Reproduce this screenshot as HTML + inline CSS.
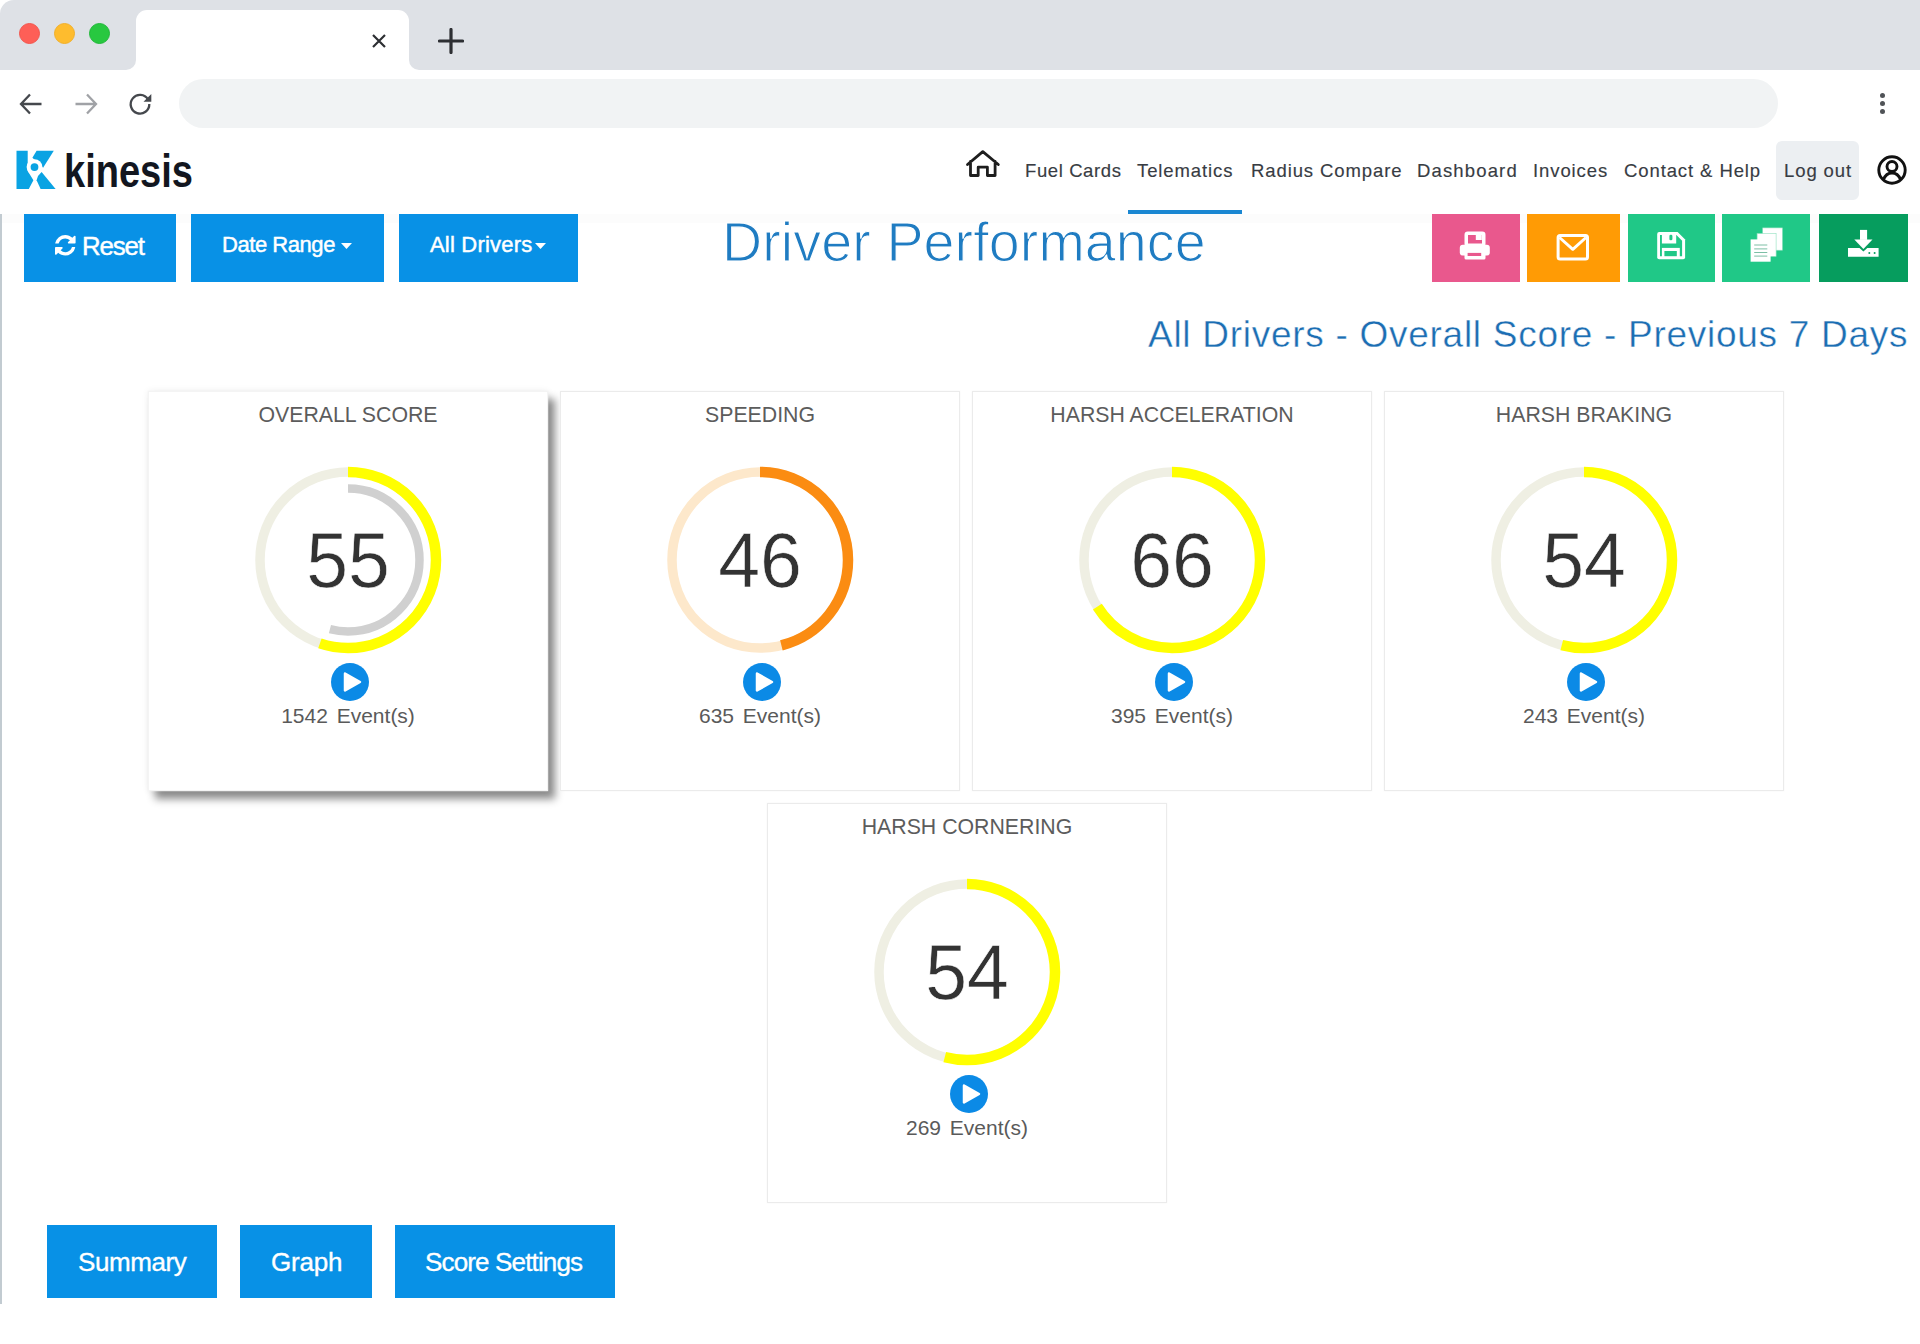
<!DOCTYPE html>
<html><head><meta charset="utf-8">
<style>
*{box-sizing:border-box;margin:0;padding:0}
html,body{width:1920px;height:1344px;overflow:hidden;background:#fff;font-family:"Liberation Sans",sans-serif}
.a{position:absolute}
.t{position:absolute;white-space:nowrap;line-height:1}
/* chrome */
#strip{left:0;top:0;width:1920px;height:70px;background:#dee1e6;border-top-left-radius:14px}
#tab{left:136px;top:10px;width:273px;height:60px;background:#fff;border-radius:11px 11px 0 0}
.dot{width:21px;height:21px;border-radius:50%;top:23px}
#addr{left:179px;top:79px;width:1599px;height:49px;background:#f1f3f4;border-radius:25px}
.btn{position:absolute;background:#0891e6;color:#fff}
.card{position:absolute;width:400px;height:400px;background:#fff;border:1px solid #ebebeb;box-shadow:0 0 1.5px #f2f2f2}
.ctitle{position:absolute;left:0;width:100%;text-align:center;font-size:21.3px;color:#5c5c5c;line-height:1;white-space:nowrap}
.num{position:absolute;left:0;width:100%;text-align:center;font-size:78px;color:#333;line-height:1;-webkit-text-stroke:0.6px #fff;transform:scaleX(0.965)}
.ev{position:absolute;left:0;width:100%;text-align:center;font-size:21px;word-spacing:3px;color:#5a5a5a;line-height:1;white-space:nowrap}
.nav{position:absolute;font-size:18.5px;letter-spacing:0.9px;color:#383c43;-webkit-text-stroke:0.15px #383c43;line-height:1;white-space:nowrap}
</style></head><body>
<!-- Browser chrome -->
<div class="a" id="strip"></div>
<div class="a" style="left:0;top:0;width:14px;height:14px;background:#fff"></div>
<div class="a" style="left:0;top:0;width:28px;height:28px;background:#dee1e6;border-top-left-radius:14px"></div>
<div class="a dot" style="left:19px;background:#fe5f57;border:1px solid #f2564e"></div>
<div class="a dot" style="left:54px;background:#febc2e;border:1px solid #f1b02a"></div>
<div class="a dot" style="left:89px;background:#28c840;border:1px solid #22b83a"></div>
<!-- tab with inverse bottom corners -->
<div class="a" style="left:126px;top:60px;width:10px;height:10px;background:#fff"></div>
<div class="a" style="left:116px;top:50px;width:20px;height:20px;background:#dee1e6;border-bottom-right-radius:10px"></div>
<div class="a" style="left:409px;top:60px;width:10px;height:10px;background:#fff"></div>
<div class="a" style="left:409px;top:50px;width:20px;height:20px;background:#dee1e6;border-bottom-left-radius:10px"></div>
<div class="a" id="tab"></div>
<svg class="a" style="left:371px;top:33px" width="16" height="16" viewBox="0 0 16 16"><path d="M2 2L14 14M14 2L2 14" stroke="#2d2f33" stroke-width="2.2" fill="none"/></svg>
<svg class="a" style="left:438px;top:28px" width="26" height="26" viewBox="0 0 26 26"><path d="M13 1.5V24.5M1.5 13H24.5" stroke="#2d2f33" stroke-width="3.2" stroke-linecap="round" fill="none"/></svg>
<!-- toolbar -->
<svg class="a" style="left:18px;top:91px" width="26" height="26" viewBox="0 0 26 26"><path d="M23.5 13H4M12 3.5L3 13L12 22.5" stroke="#45484d" stroke-width="2.3" fill="none"/></svg>
<svg class="a" style="left:73px;top:91px" width="26" height="26" viewBox="0 0 26 26"><path d="M2.5 13H22M14 3.5L23 13L14 22.5" stroke="#a0a2a6" stroke-width="2.3" fill="none"/></svg>
<svg class="a" style="left:127px;top:91px" width="26" height="26" viewBox="0 0 26 26"><path d="M21 8.5A9.3 9.3 0 1 0 22.3 13" stroke="#45484d" stroke-width="2.3" fill="none"/><path d="M24.3 3V10.8H16.5Z" fill="#45484d"/></svg>
<div class="a" id="addr"></div>
<div class="a" style="left:1880px;top:93px;width:5px;height:5px;border-radius:50%;background:#505357"></div>
<div class="a" style="left:1880px;top:101px;width:5px;height:5px;border-radius:50%;background:#505357"></div>
<div class="a" style="left:1880px;top:109px;width:5px;height:5px;border-radius:50%;background:#505357"></div>

<!-- HEADER -->
<svg class="a" style="left:0;top:140px" width="60" height="60" viewBox="0 140 60 60">
<polygon fill="#0aa3e3" points="16.5,150.8 27.7,150.8 27.7,171 33.4,180.3 28.8,188.9 16.5,188.9"/>
<polygon fill="#0aa3e3" points="36.6,150.8 53.8,150.8 43.1,167.8 32.4,157.8"/>
<polygon fill="#0aa3e3" points="41.6,172.1 55.6,188.9 40.6,188.9 36.6,180.3 38,176"/>
<circle cx="34.5" cy="167.1" r="7.9" fill="#fff"/>
<circle cx="34.5" cy="167.1" r="3.9" fill="#0aa3e3"/>
</svg>
<div class="t" id="kin" style="left:64px;top:148px;font-size:46.5px;font-weight:bold;color:#121620;transform-origin:0 0;transform:scaleX(0.818)">kinesis</div>
<svg class="a" style="left:962px;top:147px" width="40" height="34" viewBox="0 0 40 34"><path d="M5.5 17.5L20.8 4.6L36.3 17.5M8.5 14.5V28.5H16.2V20.2H25.4V28.5H33.1V14.5" stroke="#1e1e1e" stroke-width="2.8" fill="none" stroke-linejoin="round" stroke-linecap="round"/></svg>
<div class="nav" id="n1" style="left:1025px;top:162px;letter-spacing:0.6px">Fuel Cards</div>
<div class="nav" id="n2" style="left:1137px;top:162px">Telematics</div>
<div class="nav" id="n3" style="left:1251px;top:162px">Radius Compare</div>
<div class="nav" id="n4" style="left:1417px;top:162px;letter-spacing:1.15px">Dashboard</div>
<div class="nav" id="n5" style="left:1533px;top:162px">Invoices</div>
<div class="nav" id="n6" style="left:1624px;top:162px">Contact &amp; Help</div>
<div class="a" style="left:1776px;top:141px;width:83px;height:59px;background:#eceff2;border-radius:6px"></div>
<div class="nav" id="n7" style="left:1784px;top:162px">Log out</div>
<svg class="a" style="left:1874px;top:152px" width="36" height="36" viewBox="0 0 36 36"><circle cx="18" cy="18" r="13.2" stroke="#111" stroke-width="2.9" fill="none"/><circle cx="18" cy="14.5" r="5" stroke="#111" stroke-width="2.9" fill="none"/><path d="M9.5 27.5Q12 21 18 21Q24 21 26.5 27.5" stroke="#111" stroke-width="2.9" fill="none"/></svg>
<div class="a" style="left:1128px;top:210px;width:114px;height:4px;background:#1a87d2"></div>
<div class="a" style="left:0;top:214px;width:1920px;height:9px;background:#fcfcfc"></div>

<!-- CONTENT -->
<div class="a" style="left:0;top:214px;width:1.6px;height:1090px;background:#c2cbd1"></div>
<div class="btn" style="left:24px;top:214px;width:152px;height:68px"></div>
<svg class="a" style="left:55.2px;top:235.2px" width="20.6" height="20.6" viewBox="0 0 1536 1536"><path fill="#fff" d="M1511 928q0 5-1 7-64 268-268 434.5t-478 166.5q-146 0-282.5-55t-243.5-157l-129 129q-19 19-45 19t-45-19-19-45v-448q0-26 19-45t45-19h448q26 0 45 19t19 45-19 45l-137 137q71 66 161 102t187 36q134 0 250-65t186-179q11-17 53-117 8-23 30-23h192q13 0 22.5 9.5t9.5 22.5zm25-800v448q0 26-19 45t-45 19h-448q-26 0-45-19t-19-45 19-45l138-138q-148-137-349-137-134 0-250 65t-186 179q-11 17-53 117-8 23-30 23h-199q-13 0-22.5-9.5t-9.5-22.5v-7q65-268 270-434.5t480-166.5q146 0 284 55.5t245 156.5l130-129q19-19 45-19t45 19 19 45z"/></svg>
<div class="t" id="b1" style="left:82px;top:233.5px;font-size:25.8px;letter-spacing:-1.1px;color:#fff;-webkit-text-stroke:0.45px #fff">Reset</div>
<div class="btn" style="left:190.5px;top:214px;width:193.5px;height:68px"></div>
<div class="t" id="b2" style="left:222px;top:234px;font-size:22px;letter-spacing:-0.45px;color:#fff;-webkit-text-stroke:0.45px #fff">Date Range</div>
<svg class="a" style="left:341px;top:243px" width="11" height="6" viewBox="0 0 11 6"><path d="M0 0H11L5.5 6Z" fill="#fff"/></svg>
<div class="btn" style="left:399px;top:214px;width:178.5px;height:68px"></div>
<div class="t" id="b3" style="left:430px;top:234px;letter-spacing:0.2px;font-size:22px;color:#fff;-webkit-text-stroke:0.45px #fff">All Drivers</div>
<svg class="a" style="left:535px;top:243px" width="11" height="6" viewBox="0 0 11 6"><path d="M0 0H11L5.5 6Z" fill="#fff"/></svg>
<div class="t" id="title" style="left:722px;top:214.8px;letter-spacing:0.1px;font-size:55.6px;color:#1f7cc2;-webkit-text-stroke:1.2px #fff">Driver Performance</div>
<div class="a" style="left:1431.5px;top:214px;width:88px;height:67.5px;background:#e9588d"></div>
<div class="a" style="left:1527px;top:214px;width:93px;height:67.5px;background:#ff9b05"></div>
<div class="a" style="left:1628px;top:214px;width:86.5px;height:67.5px;background:#20c887"></div>
<div class="a" style="left:1722px;top:214px;width:88px;height:67.5px;background:#20c887"></div>
<div class="a" style="left:1818.5px;top:214px;width:89px;height:67.5px;background:#069d5e"></div>
<svg class="a" style="left:1455px;top:228px" width="40" height="36" viewBox="0 0 40 36"><rect x="11.25" y="5.15" width="17.5" height="12" rx="1.5" fill="none" stroke="#fff" stroke-width="3.5"/><rect x="4.8" y="16.7" width="30" height="10.9" rx="3" fill="#fff"/><rect x="9.5" y="23.5" width="21" height="8" rx="1.5" fill="#fff"/><rect x="12.6" y="24.9" width="13.6" height="3.1" fill="#e9588d"/><rect x="20.8" y="6.5" width="6" height="5.5" fill="#fff"/></svg>
<svg class="a" style="left:1550px;top:228px" width="44" height="36" viewBox="0 0 44 36"><rect x="8.1" y="7.6" width="29.4" height="23.3" rx="2" fill="none" stroke="#fff" stroke-width="3"/><path d="M9.5 9.5L22.8 21.3L36 9.5" fill="none" stroke="#fff" stroke-width="3" stroke-linejoin="round"/></svg>
<svg class="a" style="left:1652px;top:227px" width="40" height="38" viewBox="0 0 40 38"><path d="M5.2 7Q5.2 5 7.2 5H25.6L33.1 12.6V30.2Q33.1 32.2 31.1 32.2H7.2Q5.2 32.2 5.2 30.2Z" fill="#fff"/><path d="M8 8H24.4L30.1 13.8V29.2H8Z" fill="#20c887"/><rect x="9.9" y="5" width="14.3" height="11.5" fill="#fff"/><rect x="17.4" y="7.7" width="3" height="5.5" rx="1.3" fill="#20c887"/><rect x="9.9" y="20.9" width="17.9" height="10.3" fill="#fff"/><rect x="12.4" y="24" width="12.4" height="5.2" fill="#20c887"/></svg>
<svg class="a" style="left:1745px;top:223px" width="44" height="44" viewBox="0 0 44 44"><rect x="17.7" y="4.9" width="19.7" height="22.3" fill="#fff" stroke="#8fe0bf" stroke-width="0.6"/><rect x="12.1" y="10.5" width="19" height="22.9" fill="#fff" stroke="#8fe0bf" stroke-width="0.6"/><rect x="5.6" y="16.4" width="20" height="22.3" fill="#fff"/><path d="M9.2 22H22.3M9.2 25.9H22.3M9.2 29.5H22.3M9.2 33.1H22.3" stroke="#7cbfa5" stroke-width="1"/></svg>
<svg class="a" style="left:1835px;top:222px" width="50" height="40" viewBox="0 0 50 40"><path d="M13 26H24.5L28.4 29.6L32.3 26H43.6V34.8H13Z" fill="#fff"/><rect x="25" y="7.9" width="7.1" height="10" fill="#fff"/><path d="M19.3 17.5H37.5L28.4 27.1Z" fill="#fff"/><circle cx="34.3" cy="31" r="1" fill="#069d5e"/><circle cx="39.6" cy="31" r="1" fill="#069d5e"/></svg>
<div class="t" id="sub" style="left:1148px;top:315.5px;letter-spacing:0.72px;font-size:37px;color:#1c6eb3;-webkit-text-stroke:0.4px #fff">All Drivers - Overall Score - Previous 7 Days</div>
<div class="a" style="left:148px;top:391px;width:400px;height:400px;box-shadow:7px 8px 8px rgba(0,0,0,0.45),0 0 7px rgba(0,0,0,0.07)"></div>
<div class="card" style="left:148px;top:391px;border-color:#f4f4f4"><div class="ctitle" style="top:12.5px">OVERALL SCORE</div><div class="num" style="top:128.5px">55</div><div class="a" style="left:182px;top:271px;width:38px;height:38px;border-radius:50%;background:#0b8ae6"></div><svg class="a" style="left:182px;top:271px" width="38" height="38" viewBox="0 0 38 38"><path d="M14 10.5L29 19L14 27.5Z" fill="#fff" stroke="#fff" stroke-width="2.5" stroke-linejoin="round"/></svg><div class="ev" style="top:313px">1542 Event(s)</div></div>
<svg class="a" style="left:248px;top:459.7px" width="200" height="200" viewBox="0 0 200 200"><circle cx="100" cy="100" r="88" fill="none" stroke="#efefe3" stroke-width="9.5"/><circle cx="100" cy="100" r="88" fill="none" stroke="#ffff00" stroke-width="10.5" stroke-dasharray="304.66 552.92" transform="rotate(-90 100 100)"/><circle cx="100" cy="100" r="71.5" fill="none" stroke="#d0d0d0" stroke-width="8.5" stroke-dasharray="242.59 449.25" transform="rotate(-90 100 100)"/></svg>
<div class="card" style="left:560px;top:391px;"><div class="ctitle" style="top:12.5px">SPEEDING</div><div class="num" style="top:128.5px">46</div><div class="a" style="left:182px;top:271px;width:38px;height:38px;border-radius:50%;background:#0b8ae6"></div><svg class="a" style="left:182px;top:271px" width="38" height="38" viewBox="0 0 38 38"><path d="M14 10.5L29 19L14 27.5Z" fill="#fff" stroke="#fff" stroke-width="2.5" stroke-linejoin="round"/></svg><div class="ev" style="top:313px">635 Event(s)</div></div>
<svg class="a" style="left:660px;top:459.7px" width="200" height="200" viewBox="0 0 200 200"><circle cx="100" cy="100" r="88" fill="none" stroke="#fde8cb" stroke-width="9.5"/><circle cx="100" cy="100" r="88" fill="none" stroke="#fb8c12" stroke-width="10.5" stroke-dasharray="254.34 552.92" transform="rotate(-90 100 100)"/></svg>
<div class="card" style="left:972px;top:391px;"><div class="ctitle" style="top:12.5px">HARSH ACCELERATION</div><div class="num" style="top:128.5px">66</div><div class="a" style="left:182px;top:271px;width:38px;height:38px;border-radius:50%;background:#0b8ae6"></div><svg class="a" style="left:182px;top:271px" width="38" height="38" viewBox="0 0 38 38"><path d="M14 10.5L29 19L14 27.5Z" fill="#fff" stroke="#fff" stroke-width="2.5" stroke-linejoin="round"/></svg><div class="ev" style="top:313px">395 Event(s)</div></div>
<svg class="a" style="left:1072px;top:459.7px" width="200" height="200" viewBox="0 0 200 200"><circle cx="100" cy="100" r="88" fill="none" stroke="#efefe3" stroke-width="9.5"/><circle cx="100" cy="100" r="88" fill="none" stroke="#ffff00" stroke-width="10.5" stroke-dasharray="364.93 552.92" transform="rotate(-90 100 100)"/></svg>
<div class="card" style="left:1384px;top:391px;"><div class="ctitle" style="top:12.5px">HARSH BRAKING</div><div class="num" style="top:128.5px">54</div><div class="a" style="left:182px;top:271px;width:38px;height:38px;border-radius:50%;background:#0b8ae6"></div><svg class="a" style="left:182px;top:271px" width="38" height="38" viewBox="0 0 38 38"><path d="M14 10.5L29 19L14 27.5Z" fill="#fff" stroke="#fff" stroke-width="2.5" stroke-linejoin="round"/></svg><div class="ev" style="top:313px">243 Event(s)</div></div>
<svg class="a" style="left:1484px;top:459.7px" width="200" height="200" viewBox="0 0 200 200"><circle cx="100" cy="100" r="88" fill="none" stroke="#efefe3" stroke-width="9.5"/><circle cx="100" cy="100" r="88" fill="none" stroke="#ffff00" stroke-width="10.5" stroke-dasharray="298.58 552.92" transform="rotate(-90 100 100)"/></svg>
<div class="card" style="left:767px;top:803px;"><div class="ctitle" style="top:12.5px">HARSH CORNERING</div><div class="num" style="top:128.5px">54</div><div class="a" style="left:182px;top:271px;width:38px;height:38px;border-radius:50%;background:#0b8ae6"></div><svg class="a" style="left:182px;top:271px" width="38" height="38" viewBox="0 0 38 38"><path d="M14 10.5L29 19L14 27.5Z" fill="#fff" stroke="#fff" stroke-width="2.5" stroke-linejoin="round"/></svg><div class="ev" style="top:313px">269 Event(s)</div></div>
<svg class="a" style="left:867px;top:871.7px" width="200" height="200" viewBox="0 0 200 200"><circle cx="100" cy="100" r="88" fill="none" stroke="#efefe3" stroke-width="9.5"/><circle cx="100" cy="100" r="88" fill="none" stroke="#ffff00" stroke-width="10.5" stroke-dasharray="298.58 552.92" transform="rotate(-90 100 100)"/></svg>
<div class="btn" style="left:47px;top:1224.5px;width:170px;height:73.8px"></div>
<div class="t" id="s1" style="left:78px;top:1249px;letter-spacing:-0.4px;font-size:26px;color:#fff;-webkit-text-stroke:0.35px #fff">Summary</div>
<div class="btn" style="left:240px;top:1224.5px;width:132px;height:73.8px"></div>
<div class="t" id="s2" style="left:271px;top:1249px;letter-spacing:-0.2px;font-size:26px;color:#fff;-webkit-text-stroke:0.35px #fff">Graph</div>
<div class="btn" style="left:394.5px;top:1224.5px;width:220px;height:73.8px"></div>
<div class="t" id="s3" style="left:425px;top:1249px;letter-spacing:-0.85px;font-size:26px;color:#fff;-webkit-text-stroke:0.35px #fff">Score Settings</div>
</body></html>
